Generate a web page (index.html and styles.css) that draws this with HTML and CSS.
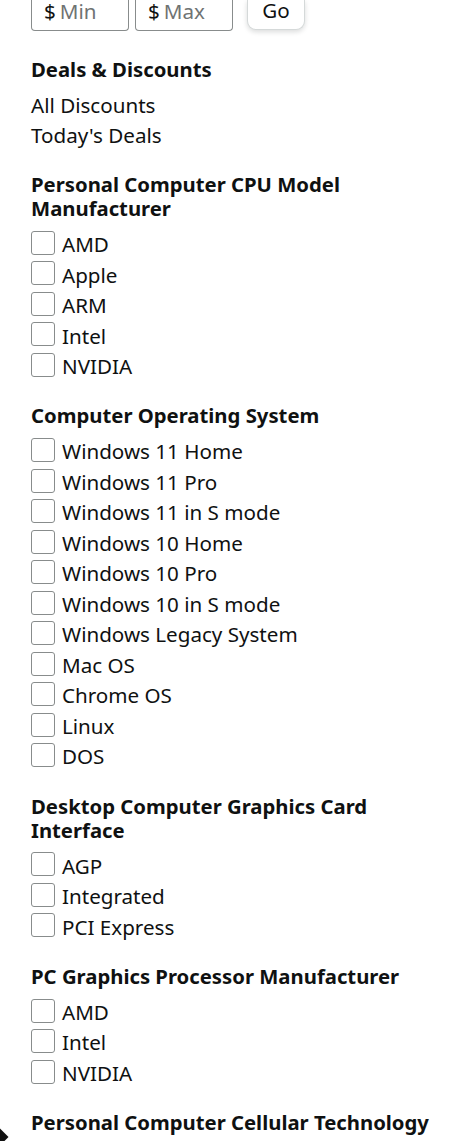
FILE: index.html
```html
<!DOCTYPE html>
<html lang="en">
<head>
<meta charset="utf-8">
<title>Filters</title>
<link rel="stylesheet" href="styles.css">
</head>
<body>
<div class="page">
  <div class="price">
    <div class="field"><span class="cur">$</span><span class="ph">Min</span></div>
    <div class="field"><span class="cur">$</span><span class="ph">Max</span></div>
    <button class="go" type="button">Go</button>
  </div>

  <section class="group">
    <h3 class="title">Deals &amp; Discounts</h3>
    <ul class="links">
      <li>All Discounts</li>
      <li>Today's Deals</li>
    </ul>
  </section>

  <section class="group">
    <h3 class="title">Personal Computer CPU Model Manufacturer</h3>
    <ul class="checks">
      <li><span class="box"></span>AMD</li>
      <li><span class="box"></span>Apple</li>
      <li><span class="box"></span>ARM</li>
      <li><span class="box"></span>Intel</li>
      <li><span class="box"></span>NVIDIA</li>
    </ul>
  </section>

  <section class="group">
    <h3 class="title">Computer Operating System</h3>
    <ul class="checks">
      <li><span class="box"></span>Windows 11 Home</li>
      <li><span class="box"></span>Windows 11 Pro</li>
      <li><span class="box"></span>Windows 11 in S mode</li>
      <li><span class="box"></span>Windows 10 Home</li>
      <li><span class="box"></span>Windows 10 Pro</li>
      <li><span class="box"></span>Windows 10 in S mode</li>
      <li><span class="box"></span>Windows Legacy System</li>
      <li><span class="box"></span>Mac OS</li>
      <li><span class="box"></span>Chrome OS</li>
      <li><span class="box"></span>Linux</li>
      <li><span class="box"></span>DOS</li>
    </ul>
  </section>

  <section class="group">
    <h3 class="title">Desktop Computer Graphics Card Interface</h3>
    <ul class="checks">
      <li><span class="box"></span>AGP</li>
      <li><span class="box"></span>Integrated</li>
      <li><span class="box"></span>PCI Express</li>
    </ul>
  </section>

  <section class="group">
    <h3 class="title">PC Graphics Processor Manufacturer</h3>
    <ul class="checks">
      <li><span class="box"></span>AMD</li>
      <li><span class="box"></span>Intel</li>
      <li><span class="box"></span>NVIDIA</li>
    </ul>
  </section>

  <section class="group">
    <h3 class="title">Personal Computer Cellular Technology</h3>
  </section>
</div>
<div class="corner"></div>
</body>
</html>
```
FILE: styles.css
```css
html, body {
  margin: 0;
  padding: 0;
  background: #ffffff;
  overflow: hidden;
}
body {
  font-family: "Noto Sans", "Open Sans", sans-serif;
  color: #0f1111;
  font-size: 20.6px;
}
.page {
  padding: 0 30px 0 31px;
}
.price {
  display: flex;
  align-items: flex-start;
  height: 31px;
}
.field {
  box-sizing: border-box;
  width: 98px;
  height: 31px;
  border: 1px solid #888c8c;
  border-top: 0;
  border-radius: 0 0 4px 4px;
  display: flex;
  align-items: center;
  padding-left: 12px;
  padding-bottom: 9px;
  gap: 4px;
  margin-right: 6px;
}
.cur, .ph {
  line-height: 18px;
}
.cur {
  color: #0f1111;
}
.ph {
  color: #6f7373;
}
.go {
  box-sizing: border-box;
  margin-left: 8px;
  width: 58px;
  height: 30px;
  border: 1px solid #d5d9d9;
  border-top: 0;
  border-radius: 0 0 9px 9px;
  background: #ffffff;
  box-shadow: 0 2px 5px rgba(15, 17, 17, 0.15);
  font-family: inherit;
  font-size: 20.6px;
  line-height: 18px;
  color: #0f1111;
  padding: 0 0 10px 0;
}
.group {
  margin-top: 21.7px;
}
.group:first-of-type {
  margin-top: 25.5px;
}
.title {
  margin: 0 0 9px 0;
  font-size: 20.3px;
  font-weight: 700;
  line-height: 24px;
}
.links, .checks {
  list-style: none;
  margin: 0;
  padding: 0;
}
.links li, .checks li {
  height: 30.5px;
  line-height: 30.5px;
  display: flex;
  align-items: center;
}
.box {
  box-sizing: border-box;
  width: 24px;
  height: 24px;
  border: 1px solid #888c8c;
  border-radius: 3px;
  margin-right: 7px;
  margin-top: -3px;
  flex: none;
}
.corner {
  position: absolute;
  left: -6px;
  top: 1131px;
  width: 12px;
  height: 12px;
  background: #111;
  transform: rotate(45deg);
}
```
